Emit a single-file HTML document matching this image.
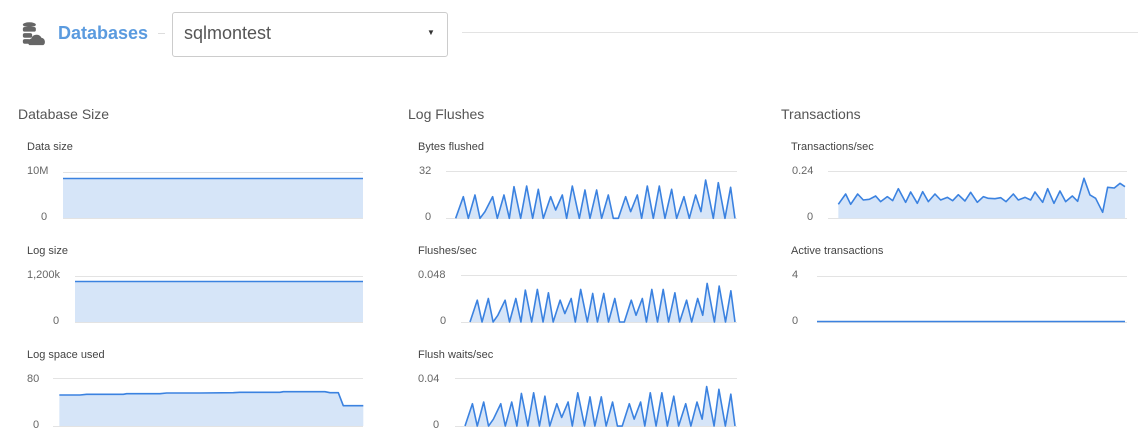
<!DOCTYPE html>
<html><head><meta charset="utf-8"><style>
body{margin:0;width:1142px;height:445px;background:#fff;font-family:"Liberation Sans",Arial,sans-serif;overflow:hidden;position:relative}
.a{position:absolute;white-space:nowrap}
.h{font-size:14px;color:#555}
.l{font-size:11px;color:#444}
.t{font-size:11px;color:#666}
</style></head><body>
<svg class="a" style="left:21px;top:21px" width="26" height="26" viewBox="0 0 28 28">
<ellipse cx="9" cy="4" rx="7" ry="2.6" fill="#666"/>
<rect x="2" y="6.5" width="14" height="5" rx="2" fill="#666"/>
<rect x="2" y="13" width="10" height="5" rx="2" fill="#666"/>
<rect x="2" y="19.5" width="8" height="5" rx="2" fill="#666"/>
<path d="M9 26 a4 4 0 0 1 2-7 a6 6 0 0 1 11-1 a4.5 4.5 0 0 1 2 8z" fill="#666"/>
</svg>
<div class="a" style="left:58px;top:23px;font-size:18px;font-weight:bold;color:#5b9bdf">Databases</div>
<div class="a" style="left:158px;top:33px;width:7px;height:1px;background:#ddd"></div>
<div class="a" style="left:172px;top:12px;width:274px;height:43px;border:1px solid #ccc;border-radius:3px"></div>
<div class="a" style="left:184px;top:23px;font-size:18px;color:#555">sqlmontest</div>
<div class="a" style="left:427px;top:28px;font-size:8px;color:#333">▼</div>
<div class="a" style="left:462px;top:32px;width:676px;height:1px;background:#e3e3e3"></div>

<div class="a h" style="left:18px;top:106px">Database Size</div>
<div class="a h" style="left:408px;top:106px">Log Flushes</div>
<div class="a h" style="left:781px;top:106px">Transactions</div>

<div class="a l" style="left:27px;top:141px">Data size</div>
<div class="a l" style="left:27px;top:245px">Log size</div>
<div class="a l" style="left:27px;top:349px">Log space used</div>
<div class="a l" style="left:418px;top:141px">Bytes flushed</div>
<div class="a l" style="left:418px;top:245px">Flushes/sec</div>
<div class="a l" style="left:418px;top:349px">Flush waits/sec</div>
<div class="a l" style="left:791px;top:141px">Transactions/sec</div>
<div class="a l" style="left:791px;top:245px">Active transactions</div>

<div class="a t" style="left:27px;top:165px">10M</div>
<div class="a t" style="left:41px;top:211px">0</div>
<div class="a t" style="left:27px;top:269px">1,200k</div>
<div class="a t" style="left:53px;top:315px">0</div>
<div class="a t" style="left:27px;top:373px">80</div>
<div class="a t" style="left:33px;top:419px">0</div>
<div class="a t" style="left:419px;top:165px">32</div>
<div class="a t" style="left:425px;top:211px">0</div>
<div class="a t" style="left:418px;top:269px">0.048</div>
<div class="a t" style="left:440px;top:315px">0</div>
<div class="a t" style="left:418px;top:373px">0.04</div>
<div class="a t" style="left:433px;top:419px">0</div>
<div class="a t" style="left:792px;top:165px">0.24</div>
<div class="a t" style="left:807px;top:211px">0</div>
<div class="a t" style="left:792px;top:269px">4</div>
<div class="a t" style="left:792px;top:315px">0</div>

<svg class="a" style="left:0;top:0" width="1142" height="445">
<g stroke="#e3e3e3" stroke-width="1">
<line x1="63" y1="172.5" x2="363" y2="172.5"/><line x1="63" y1="218.5" x2="363" y2="218.5"/>
<line x1="75" y1="276.5" x2="363" y2="276.5"/><line x1="75" y1="322.5" x2="363" y2="322.5"/>
<line x1="53" y1="378.5" x2="363" y2="378.5"/><line x1="53" y1="426.5" x2="363" y2="426.5"/>
<line x1="446" y1="171.5" x2="737" y2="171.5"/><line x1="446" y1="218.5" x2="737" y2="218.5"/>
<line x1="461" y1="275.5" x2="737" y2="275.5"/><line x1="461" y1="322.5" x2="737" y2="322.5"/>
<line x1="455" y1="378.5" x2="737" y2="378.5"/><line x1="455" y1="426.5" x2="737" y2="426.5"/>
<line x1="828" y1="171.5" x2="1127" y2="171.5"/><line x1="828" y1="218.5" x2="1127" y2="218.5"/>
<line x1="817" y1="276.5" x2="1127" y2="276.5"/><line x1="817" y1="322.5" x2="1127" y2="322.5"/>
</g>
<g fill="#d6e5f8" stroke="#3b82e0" stroke-width="1.6" stroke-linejoin="round">
<path d="M63 218 V178.5 H363 V218Z" stroke="none"/><line x1="63" y1="178.5" x2="363" y2="178.5"/>
<path d="M75 322 V281.5 H363 V322Z" stroke="none"/><line x1="75" y1="281.5" x2="363" y2="281.5"/>
<g transform="translate(0,340) scale(0.3333)">
<polyline vector-effect="non-scaling-stroke" points="178,258 178,165 240,165 260,163 370,163 380,161 480,161 500,159 600,159 700,158 720,157 840,157 850,155 975,155 990,158 1015,158 1030,197 1090,197 1090,258" stroke="none"/>
<polyline vector-effect="non-scaling-stroke" fill="none" points="178,165 240,165 260,163 370,163 380,161 480,161 500,159 600,159 700,158 720,157 840,157 850,155 975,155 990,158 1015,158 1030,197 1090,197"/>
</g>
<g transform="translate(400,160) scale(0.3333)"><polyline vector-effect="non-scaling-stroke" points="167,175 190,110 205,175 225,105 240,175 255,155 278,110 292,175 312,105 328,175 342,80 362,175 380,78 398,175 415,88 430,175 452,110 467,150 487,105 500,175 517,78 538,175 555,90 570,175 590,90 605,175 625,105 640,175 655,175 677,110 692,155 712,105 725,175 742,78 760,175 778,78 795,175 815,88 830,175 852,110 868,175 887,105 903,155 917,60 940,175 955,68 975,175 992,82 1005,175"/></g>
<g transform="translate(417.2,263.25) scale(0.3162,0.3357)"><polyline vector-effect="non-scaling-stroke" points="167,175 190,110 205,175 225,105 240,175 255,155 278,110 292,175 312,105 328,175 342,80 362,175 380,78 398,175 415,88 430,175 452,110 467,150 487,105 500,175 517,78 538,175 555,90 570,175 590,90 605,175 625,105 640,175 655,175 677,110 692,155 712,105 725,175 742,78 760,175 778,78 795,175 815,88 830,175 852,110 868,175 887,105 903,155 917,60 940,175 955,68 975,175 992,82 1005,175"/></g>
<g transform="translate(411.2,366) scale(0.3222,0.343)"><polyline vector-effect="non-scaling-stroke" points="167,175 190,110 205,175 225,105 240,175 255,155 278,110 292,175 312,105 328,175 342,80 362,175 380,78 398,175 415,88 430,175 452,110 467,150 487,105 500,175 517,78 538,175 555,90 570,175 590,90 605,175 625,105 640,175 655,175 677,110 692,155 712,105 725,175 742,78 760,175 778,78 795,175 815,88 830,175 852,110 868,175 887,105 903,155 917,60 940,175 955,68 975,175 992,82 1005,175"/></g>
<g transform="translate(780,160) scale(0.3333)">
<polyline vector-effect="non-scaling-stroke" stroke="none" points="175,175 175,133 197,102 212,133 233,102 250,120 268,118 287,108 302,125 322,110 338,122 355,86 377,127 392,96 412,130 428,95 445,125 465,102 482,120 502,112 518,122 535,104 555,123 572,97 592,127 610,110 625,115 645,116 662,113 678,125 700,102 715,120 735,112 752,120 765,96 788,127 803,86 822,130 840,93 857,125 877,108 893,124 912,55 930,105 947,115 968,157 983,82 1003,84 1020,70 1035,80 1035,175"/>
<polyline vector-effect="non-scaling-stroke" fill="none" points="175,133 197,102 212,133 233,102 250,120 268,118 287,108 302,125 322,110 338,122 355,86 377,127 392,96 412,130 428,95 445,125 465,102 482,120 502,112 518,122 535,104 555,123 572,97 592,127 610,110 625,115 645,116 662,113 678,125 700,102 715,120 735,112 752,120 765,96 788,127 803,86 822,130 840,93 857,125 877,108 893,124 912,55 930,105 947,115 968,157 983,82 1003,84 1020,70 1035,80"/>
</g>
<line x1="817" y1="321.5" x2="1125" y2="321.5"/>
</g>
</svg>
</body></html>
